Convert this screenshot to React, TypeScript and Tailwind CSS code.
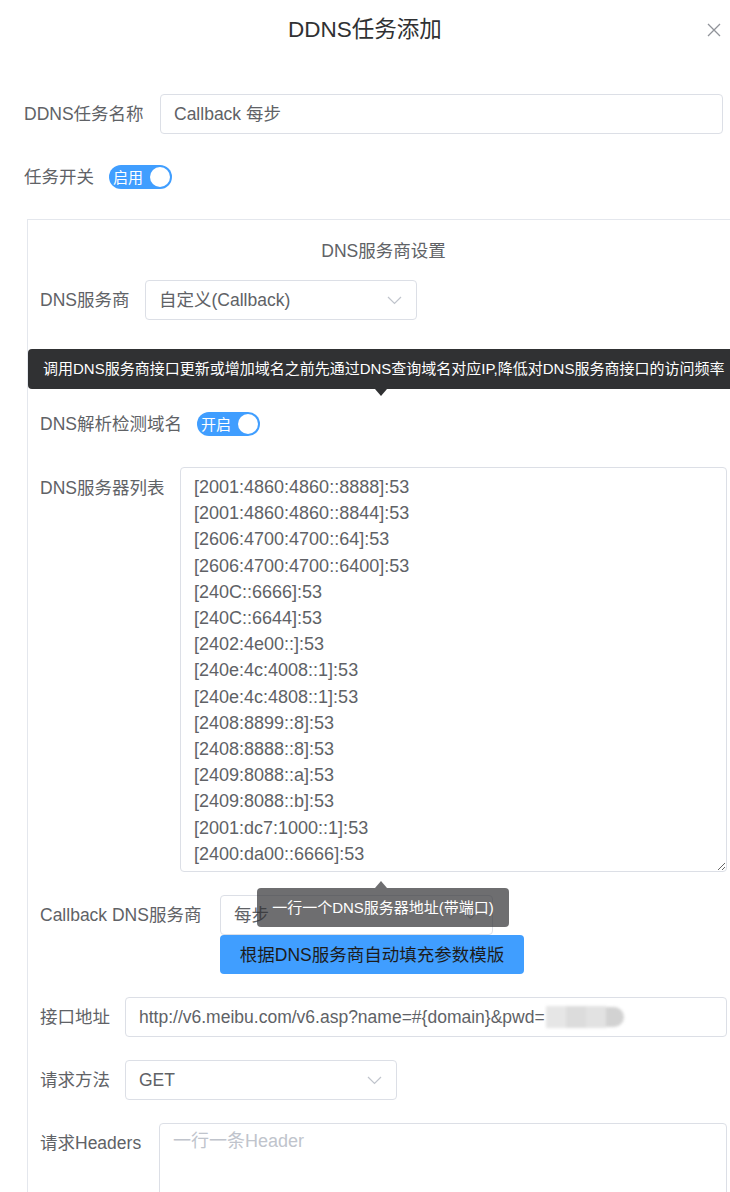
import React from "react";

const FONT = { fontFamily: '"Liberation Sans", "Noto Sans CJK SC", sans-serif' };

const servers = [
  "[2001:4860:4860::8888]:53",
  "[2001:4860:4860::8844]:53",
  "[2606:4700:4700::64]:53",
  "[2606:4700:4700::6400]:53",
  "[240C::6666]:53",
  "[240C::6644]:53",
  "[2402:4e00::]:53",
  "[240e:4c:4008::1]:53",
  "[240e:4c:4808::1]:53",
  "[2408:8899::8]:53",
  "[2408:8888::8]:53",
  "[2409:8088::a]:53",
  "[2409:8088::b]:53",
  "[2001:dc7:1000::1]:53",
  "[2400:da00::6666]:53",
];

function Chevron() {
  return (
    <svg width="15" height="9" viewBox="0 0 15 9" fill="none">
      <path d="M1 1 L7.5 7.5 L14 1" stroke="#c0c4cc" strokeWidth="1.2" />
    </svg>
  );
}

function Switch({ text }: { text: string }) {
  return (
    <div className="flex h-[24px] w-[63px] items-center justify-between rounded-full bg-[#409eff] pl-[4px] pr-[2px]">
      <span className="text-[15px] leading-none text-white">{text}</span>
      <span className="h-[20px] w-[20px] rounded-full bg-white" />
    </div>
  );
}

function Select({ value, width }: { value: string; width: string }) {
  return (
    <div
      className={`flex h-[40px] ${width} items-center justify-between rounded-[4px] border border-[#dcdfe6] bg-white pl-[13px] pr-[14px] text-[17.5px] text-[#606266]`}
    >
      <span>{value}</span>
      <Chevron />
    </div>
  );
}

export default function App() {
  return (
    <div className="relative h-[1192px] w-[730px] overflow-hidden bg-white leading-[24px]" style={FONT}>
      {/* header */}
      <div className="flex h-[60px] items-center">
        <div className="w-[40px]" />
        <div className="flex-1 text-center text-[22.5px] text-[#303133]">DDNS任务添加</div>
        <div className="flex w-[40px] items-center justify-center pl-[8px]">
          <svg width="14" height="14" viewBox="0 0 14 14">
            <path d="M1 1 L13 13 M13 1 L1 13" stroke="#909399" strokeWidth="1.3" />
          </svg>
        </div>
      </div>

      {/* row: name */}
      <div className="mt-[34px] flex h-[40px] items-center pl-[24px] pr-[7px] text-[17.5px] text-[#606266]">
        <div className="w-[136px]">DDNS任务名称</div>
        <div className="flex h-[40px] flex-1 items-center rounded-[4px] border border-[#dcdfe6] pl-[13px]">
          Callback 每步
        </div>
      </div>

      {/* row: switch */}
      <div className="mt-[31px] flex h-[24px] items-center pl-[24px] text-[17.5px] text-[#606266]">
        <div className="w-[85px]">任务开关</div>
        <Switch text="启用" />
      </div>

      {/* card */}
      <div className="mt-[30px] ml-[27px] w-[714px] border border-[#e4e7ed] pb-[40px] pl-[12px] pr-[13px] text-[17.5px] text-[#606266]">
        <div className="mt-[19px] h-[24px] text-center leading-[24px]">DNS服务商设置</div>

        <div className="mt-[17px] flex h-[40px] items-center">
          <div className="w-[105px]">DNS服务商</div>
          <Select value="自定义(Callback)" width="w-[272px]" />
        </div>

        <div className="mt-[92px] flex h-[24px] items-center">
          <div className="w-[157px]">DNS解析检测域名</div>
          <Switch text="开启" />
        </div>

        <div className="mt-[31px] flex items-start">
          <div className="w-[140px] pt-[9px] leading-[24px]">DNS服务器列表</div>
          <textarea
            readOnly
            value={servers.join("\n")}
            className="block h-[405px] flex-1 rounded-[4px] border border-[#dcdfe6] pl-[13px] pt-[6px] text-[18px] leading-[26.2px] text-[#606266] outline-none"
            style={FONT}
          />
        </div>

        <div className="mt-[23px] flex items-start">
          <div className="flex h-[40px] w-[180px] items-center">Callback DNS服务商</div>
          <div className="flex flex-col">
            <Select value="每步" width="w-[273px]" />
            <div className="flex h-[39px] w-[304px] items-center justify-center rounded-[4px] bg-[#409eff] text-[17.5px] text-[#1c1c1c]">
              根据DNS服务商自动填充参数模版
            </div>
          </div>
        </div>

        <div className="mt-[23px] flex h-[40px] items-center">
          <div className="w-[85px]">接口地址</div>
          <div className="flex h-[40px] flex-1 items-center rounded-[4px] border border-[#dcdfe6] pl-[13px]">
            <span>http://v6.meibu.com/v6.asp?name=#{"{domain}"}&amp;pwd=</span>
            <span className="ml-[1px] flex h-[26px] w-[80px] items-center blur-[1.5px]">
              <span className="h-[22px] w-[20px] bg-[#e6e6e6]" />
              <span className="h-[22px] w-[20px] bg-[#dcdcdc]" />
              <span className="h-[22px] w-[20px] bg-[#e2e2e2]" />
              <span className="h-[20px] w-[18px] rounded-r-full bg-[#d2d2d2]" />
            </span>
          </div>
        </div>

        <div className="mt-[23px] flex h-[40px] items-center">
          <div className="w-[85px]">请求方法</div>
          <Select value="GET" width="w-[272px]" />
        </div>

        <div className="mt-[23px] flex items-start">
          <div className="w-[119px] pt-[8px] leading-[24px]">请求Headers</div>
          <textarea
            readOnly
            placeholder="一行一条Header"
            className="block h-[110px] flex-1 rounded-[4px] border border-[#dcdfe6] pl-[13px] pt-[4px] text-[18px] leading-[26px] text-[#606266] outline-none placeholder:text-[#c0c4cc]"
            style={FONT}
          />
        </div>
      </div>

      {/* dark tooltip */}
      <div className="absolute left-[28px] top-[349px] flex h-[40px] w-[712px] items-center rounded-[4px] bg-[#303133] pl-[15px] text-[15px] text-white">
        调用DNS服务商接口更新或增加域名之前先通过DNS查询域名对应IP,降低对DNS服务商接口的访问频率
        <span className="absolute left-[347px] top-[40px] h-0 w-0 border-x-[6px] border-t-[7px] border-x-transparent border-t-[#303133]" />
      </div>

      {/* gray tooltip */}
      <div className="absolute left-[257px] top-[888px] flex h-[39px] w-[252px] items-center justify-center rounded-[4px] bg-[#303133]/70 text-[15px] text-white">
        一行一个DNS服务器地址(带端口)
        <span className="absolute left-[118px] top-[-7px] h-0 w-0 border-x-[6px] border-b-[7px] border-x-transparent border-b-[#303133]/70" />
      </div>
    </div>
  );
}
